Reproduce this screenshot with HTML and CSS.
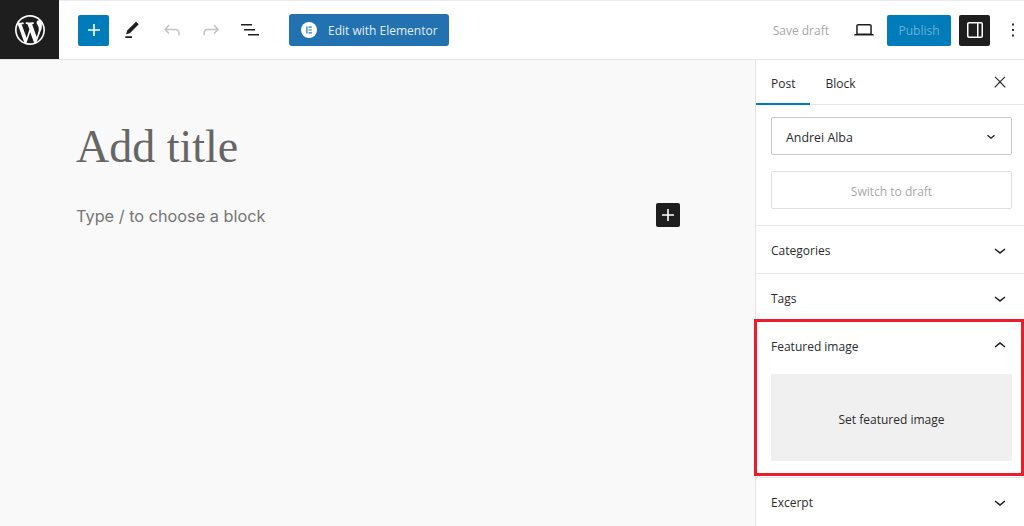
FILE: index.html
```html
<!DOCTYPE html>
<html lang="en">
<head>
<meta charset="utf-8">
<title>Add title</title>
<link rel="stylesheet" href="styles.css">
</head>
<body>
<header class="topbar">
  <div class="wp-logo">
    <svg class="wp-mark" viewBox="0 0 20 20"><path fill="#fff" d="M20 10c0-5.51-4.49-10-10-10C4.48 0 0 4.49 0 10c0 5.52 4.48 10 10 10 5.51 0 10-4.48 10-10zM7.78 15.37L4.37 6.22c.55-.02 1.17-.08 1.17-.08.5-.06.44-1.13-.06-1.11 0 0-1.45.11-2.37.11-.18 0-.37 0-.58-.01C4.12 2.69 6.87 1.11 10 1.11c2.33 0 4.45.87 6.05 2.34-.68-.11-1.65.39-1.65 1.58 0 .74.45 1.36.9 2.1.35.61.55 1.36.55 2.46 0 1.49-1.4 5-1.4 5l-3.03-8.37c.54-.02.82-.17.82-.17.5-.05.44-1.25-.06-1.22 0 0-1.44.12-2.38.12-.87 0-2.33-.12-2.33-.12-.5-.03-.56 1.2-.06 1.22l.92.08 1.26 3.41zM17.41 10c.24-.64.74-1.87.43-4.25.7 1.29 1.05 2.71 1.05 4.25 0 3.29-1.73 6.24-4.4 7.78.97-2.59 1.94-5.2 2.92-7.78zM6.1 18.09C3.12 16.65 1.11 13.53 1.11 10c0-1.3.23-2.48.72-3.59C3.25 10.3 4.67 14.2 6.1 18.09zm4.03-6.63l2.58 6.98c-.86.29-1.76.45-2.71.45-.79 0-1.57-.11-2.29-.33.81-2.38 1.62-4.74 2.42-7.1z"/></svg>
  </div>
  <div class="tools">
    <button class="tool tool-add"><svg viewBox="0 0 24 24" class="ic"><path fill="#fff" d="M18 11.2h-5.2V6h-1.6v5.2H6v1.6h5.2V18h1.6v-5.2H18z"/></svg></button>
    <button class="tool"><svg viewBox="0 0 24 24" class="ic ic-pencil"><path fill="#1e1e1e" d="M20.1 5.1 16.9 2 6.2 12.7l-1.3 4.4 4.5-1.3L20.1 5.1zM4 21.5h8v-2H4v2z"/></svg></button>
    <button class="tool"><svg viewBox="0 0 24 24" class="ic"><path fill="#c4c4c4" d="M18.3 11.7c-.6-.6-1.4-.9-2.3-.9H6.7l2.9-3.3-1.1-1-4.5 5L8.5 16l1-1-2.7-2.7H16c.5 0 .9.2 1.3.5 1 1 1 3.4 1 4.5v.3h1.5v-.2c0-1.5 0-4.3-1.5-5.7z"/></svg></button>
    <button class="tool"><svg viewBox="0 0 24 24" class="ic"><path fill="#c4c4c4" d="M15.6 6.5l-1.1 1 2.9 3.3H8c-.9 0-1.7.3-2.3.9-1.4 1.5-1.4 4.2-1.4 5.6v.2h1.5v-.3c0-1.1 0-3.5 1-4.5.3-.3.7-.5 1.3-.5h9.2L14.5 15l1.1 1.1 4.6-4.6-4.6-5z"/></svg></button>
    <button class="tool"><svg viewBox="0 0 24 24" class="ic"><path fill="#1e1e1e" d="M3 6h11v1.5H3V6zm3 5h11v1.5H6V11zm4 5h11v1.5H10V16z"/></svg></button>
  </div>
  <button class="elementor-btn">
    <svg class="el-mark" viewBox="0 0 16 16"><circle cx="8" cy="8" r="8" fill="#fff"/><path fill="#2271b1" d="M5.3 4.6h1.2v6.8H5.3zM7.6 4.6h3.2v1.2H7.6zM7.6 7.4h3.2v1.2H7.6zM7.6 10.2h3.2v1.2H7.6z"/></svg>
    <span>Edit with Elementor</span>
  </button>
  <div class="actions">
    <span class="save-draft">Save draft</span>
    <button class="tool tool-view"><svg viewBox="0 0 24 24" class="ic"><path fill="#1e1e1e" d="M20.5 16h-.7V8c0-1.1-.9-2-2-2H6.2c-1.1 0-2 .9-2 2v8h-.7c-.8 0-1.5.7-1.5 1.5h20c0-.8-.7-1.5-1.5-1.5zM5.7 8c0-.3.2-.5.5-.5h11.6c.3 0 .5.2.5.5v7.6H5.7V8z"/></svg></button>
    <button class="publish">Publish</button>
    <button class="tool tool-panel"><svg viewBox="0 0 24 24" class="ic"><path fill="#fff" d="M18 4H6c-1.1 0-2 .9-2 2v12c0 1.1.9 2 2 2h12c1.1 0 2-.9 2-2V6c0-1.1-.9-2-2-2zM5.5 18V6c0-.3.2-.5.5-.5h8v13H6c-.3 0-.5-.2-.5-.5zm13 0c0 .3-.2.5-.5.5h-2.5v-13H18c.3 0 .5.2.5.5v12z"/></svg></button>
    <button class="tool tool-more"><svg viewBox="0 0 24 24" class="ic"><path fill="#1e1e1e" d="M13 19h-2v-2h2v2zm0-6h-2v-2h2v2zm0-6h-2V5h2v2z"/></svg></button>
  </div>
</header>

<div class="workspace">
  <main class="editor">
    <h1 class="post-title">Add title</h1>
    <div class="block-row">
      <p class="block-hint">Type / to choose a block</p>
      <button class="inline-add"><svg viewBox="0 0 24 24" class="ic"><path fill="#fff" d="M18 11.2h-5.2V6h-1.6v5.2H6v1.6h5.2V18h1.6v-5.2H18z"/></svg></button>
    </div>
  </main>

  <aside class="sidebar">
    <div class="tabs">
      <span class="tab tab-active">Post</span>
      <span class="tab">Block</span>
      <svg class="close" viewBox="0 0 24 24"><path fill="#1e1e1e" d="M13 11.8l6.1-6.3-1-1-6.1 6.2-6.1-6.2-1 1 6.1 6.3-6.5 6.7 1 1 6.5-6.6 6.5 6.6 1-1z"/></svg>
    </div>
    <section class="summary">
      <div class="author-select">
        <span>Andrei Alba</span>
        <svg class="small-chev" viewBox="0 0 24 24"><path fill="none" stroke="#1e1e1e" stroke-width="2.6" d="M5 8.5l7 6 7-6"/></svg>
      </div>
      <button class="switch-draft">Switch to draft</button>
    </section>
    <section class="panel">
      <div class="panel-head"><span>Categories</span><svg class="chev" viewBox="0 0 24 24"><path fill="#1e1e1e" d="M17.5 11.6L12 16l-5.5-4.4.9-1.2L12 14l4.5-3.6 1 1.2z"/></svg></div>
    </section>
    <section class="panel">
      <div class="panel-head"><span>Tags</span><svg class="chev" viewBox="0 0 24 24"><path fill="#1e1e1e" d="M17.5 11.6L12 16l-5.5-4.4.9-1.2L12 14l4.5-3.6 1 1.2z"/></svg></div>
    </section>
    <section class="panel panel-open">
      <div class="panel-head"><span>Featured image</span><svg class="chev" viewBox="0 0 24 24"><path fill="#1e1e1e" d="M6.5 12.4L12 8l5.5 4.4-.9 1.2L12 10l-4.5 3.6-1-1.2z"/></svg></div>
      <div class="featured-box">Set featured image</div>
    </section>
    <section class="panel panel-last">
      <div class="panel-head"><span>Excerpt</span><svg class="chev" viewBox="0 0 24 24"><path fill="#1e1e1e" d="M17.5 11.6L12 16l-5.5-4.4.9-1.2L12 14l4.5-3.6 1 1.2z"/></svg></div>
    </section>
    <div class="annotation"></div>
  </aside>
</div>
</body>
</html>
```

FILE: styles.css
```css
* { box-sizing: border-box; }
html, body { margin: 0; height: 100%; overflow: hidden; }
body {
  background: #fff;
  color: #2b2b2b;
  font-family: "Open Sans", "Noto Sans", sans-serif;
  font-size: 12px;
}
button { font: inherit; border: 0; padding: 0; background: none; color: inherit; }
.ic { width: 24px; height: 24px; display: block; }
.ic-pencil { width: 20px; height: 20px; }

.topbar {
  height: 60px;
  display: flex;
  align-items: center;
  border-bottom: 1px solid #e5e5e5;
  border-top: 1px solid #ececec;
}
.wp-logo {
  width: 59px;
  height: 59px;
  margin-top: -1px;
  background: #1e1e1e;
  display: flex;
  align-items: center;
  justify-content: center;
}
.wp-mark { width: 30px; height: 30px; }
.tools { display: flex; align-items: center; margin-left: 19px; gap: 7.25px; }
.tool {
  width: 32px;
  height: 32px;
  border-radius: 2px;
  display: flex;
  align-items: center;
  justify-content: center;
}
.tool-add { width: 31px; height: 31px; background: #007cba; }
.elementor-btn {
  margin-left: 23px;
  width: 160px;
  height: 32px;
  border-radius: 3px;
  background: #2271b1;
  color: #e4edf5;
  display: flex;
  align-items: center;
  padding-left: 12px;
  gap: 11px;
}
.el-mark { width: 16px; height: 16px; }
.actions { margin-left: auto; display: flex; align-items: center; }
.save-draft { color: #a7a7a7; margin-right: 19px; }
.publish {
  width: 64px;
  height: 31px;
  margin-left: 7px;
  border-radius: 2px;
  background: #007cba;
  color: #6cb0d6;
}
.tool-panel { width: 31px; height: 31px; margin-left: 8px; background: #1e1e1e; }
.tool-more { width: 22px; margin-left: 12px; }

.workspace { display: flex; height: 466px; }
.editor { flex: 1; min-width: 0; background: #f9f9f9; padding: 58px 0 0 76px; }
.post-title {
  margin: 0;
  padding-top: 1px;
  font-family: "Liberation Serif", serif;
  font-weight: 400;
  font-size: 46px;
  line-height: 56px;
  color: #666;
}
.block-row {
  margin-top: 28px;
  display: flex;
  align-items: center;
  justify-content: space-between;
  width: 604px;
}
.block-hint { margin: 0; padding-top: 2px; font-family: Inter, sans-serif; font-size: 16.3px; color: #757575; }
.inline-add {
  width: 24px;
  height: 24px;
  background: #1e1e1e;
  border-radius: 2px;
}

.sidebar {
  position: relative;
  flex: 0 0 269px;
  background: #fff;
  border-left: 1px solid #e5e5e5;
}
.tabs {
  height: 45px;
  display: flex;
  align-items: center;
  border-bottom: 1px solid #e5e5e5;
  padding-left: 15px;
  gap: 30px;
}
.tab { position: relative; line-height: 47px; height: 44px; }
.tab-active::after {
  content: "";
  position: absolute;
  left: -15px;
  right: -15px;
  bottom: -1px;
  height: 2px;
  background: #007cba;
}
.close { width: 18px; height: 18px; margin-left: auto; margin-right: 15px; }
.summary { padding: 12px 12px 16px 15px; border-bottom: 1px solid #e5e5e5; }
.author-select {
  height: 38px;
  border: 1px solid #c9c9c9;
  border-radius: 2px;
  display: flex;
  align-items: center;
  justify-content: space-between;
  padding: 2px 14px 0 14px;
  font-size: 12.4px;
}
.small-chev { width: 12px; height: 12px; }
.switch-draft {
  display: block;
  width: 100%;
  height: 38px;
  margin-top: 16px;
  padding-top: 2px;
  border: 1px solid #e0e0e0;
  border-radius: 2px;
  color: #a7a7a7;
}
.panel { border-bottom: 1px solid #e5e5e5; }
.panel-head {
  height: 47px;
  display: flex;
  align-items: center;
  justify-content: space-between;
  padding: 0 12px 0 15px;
}
.panel-head span { padding-top: 2px; }
.chev { width: 24px; height: 24px; }
.panel-open { height: 156px; }
.featured-box {
  margin: 5px 12px 0 15px;
  height: 87px;
  padding-top: 3px;
  background: #f0f0f0;
  display: flex;
  align-items: center;
  justify-content: center;
}
.panel-last { height: 50px; }
.annotation {
  position: absolute;
  left: -2px;
  top: 259px;
  width: 270px;
  height: 157px;
  border: 3px solid #ec1c2a;
  pointer-events: none;
}
```
